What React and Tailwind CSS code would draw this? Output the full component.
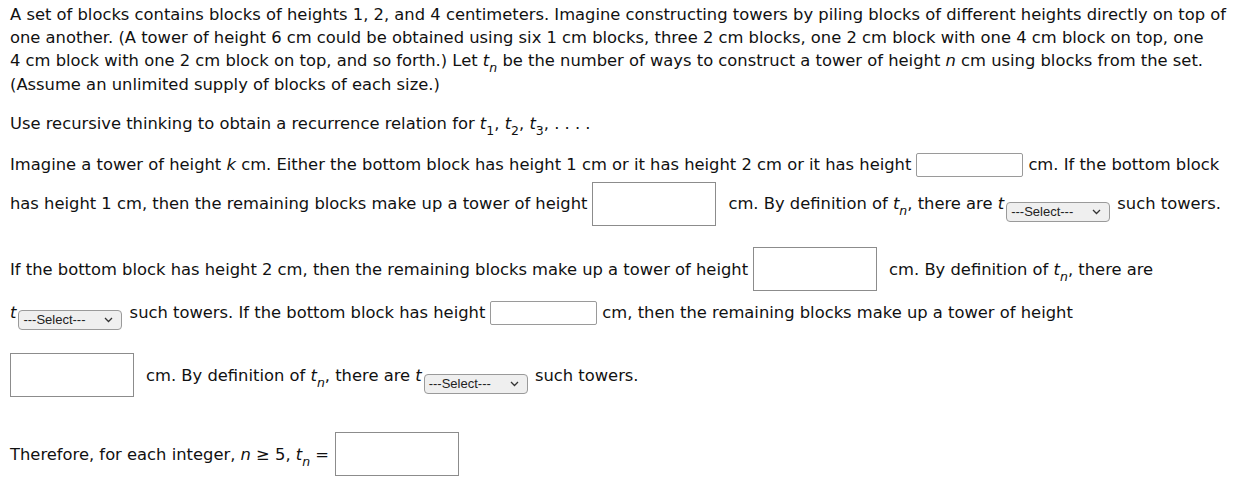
import React from 'react';

const T = ({ sub, italicSub = true }) => (
  <span className="whitespace-nowrap">
    <i>t</i>
    <span className={`relative top-[6px] text-[12.5px] ${italicSub ? 'italic' : ''}`}>{sub}</span>
  </span>
);

const SmallBox = () => (
  <span className="mx-[5px] inline-block h-[24px] w-[107px] shrink-0 rounded-[2px] border border-[#9a9a9a] bg-white" />
);

const BigBox = ({ cls = 'ml-[5px] mr-[12px]' }) => (
  <span className={`inline-block h-[44px] w-[124px] shrink-0 border border-[#8c8c8c] bg-white ${cls}`} />
);

const SelectBox = ({ offset = 'mt-[14px]' }) => (
  <span
    className={`mx-[2px] inline-flex h-[20px] w-[104px] shrink-0 items-center justify-between rounded-[4px] border border-[#9a9a9a] bg-[#efefef] pl-[4px] pr-[8px] text-[13px] text-[#222] ${offset}`}
    style={{ fontFamily: '"Liberation Sans", Arial, sans-serif' }}
  >
    <span>---Select---</span>
    <svg width="9" height="6" viewBox="0 0 9 6" fill="none">
      <path d="M1 1l3.5 3.5L8 1" stroke="#333" strokeWidth="1.3" />
    </svg>
  </span>
);

export default function App() {
  return (
    <div
      className="w-[1247px] bg-white pl-[10px] text-[16.35px] text-[#111]"
      style={{ fontFamily: '"DejaVu Sans", Verdana, sans-serif' }}
    >
      <div className="pt-[3px] leading-[23px] whitespace-nowrap">
        <div>
          A set of blocks contains blocks of heights 1, 2, and 4 centimeters. Imagine constructing towers by piling
          blocks of different heights directly on top of
        </div>
        <div>
          one another. (A tower of height 6 cm could be obtained using six 1 cm blocks, three 2 cm blocks, one 2 cm
          block with one 4 cm block on top, one
        </div>
        <div>
          4 cm block with one 2 cm block on top, and so forth.) Let <T sub="n" /> be the number of ways to construct a
          tower of height <i>n</i> cm using blocks from the set.
        </div>
        <div>(Assume an unlimited supply of blocks of each size.)</div>
      </div>

      <p className="mt-[16px] leading-[23px]">
        Use recursive thinking to obtain a recurrence relation for <T sub="1" italicSub={false} />,{' '}
        <T sub="2" italicSub={false} />, <T sub="3" italicSub={false} />, . . . .
      </p>

      <div className="mt-[17px] flex h-[24px] items-center whitespace-pre">
        <span>
          Imagine a tower of height <i>k</i> cm. Either the bottom block has height 1 cm or it has height 2 cm or it
          has height
        </span>
        <SmallBox />
        <span>cm. If the bottom block</span>
      </div>

      <div className="mt-[5px] flex h-[44px] items-center whitespace-pre">
        <span>has height 1 cm, then the remaining blocks make up a tower of height</span>
        <BigBox />
        <span>cm. By definition of <T sub="n" />, there are <i>t</i></span>
        <SelectBox offset="mt-[16px]" />
        <span> such towers.</span>
      </div>

      <div className="mt-[21px] flex h-[44px] items-center whitespace-pre">
        <span className="mt-[3px]">If the bottom block has height 2 cm, then the remaining blocks make up a tower of height</span>
        <BigBox />
        <span className="mt-[3px]">cm. By definition of <T sub="n" />, there are</span>
      </div>

      <div className="mt-[10px] flex h-[24px] items-center whitespace-pre">
        <i>t</i>
        <SelectBox offset="mt-[14px]" />
        <span> such towers. If the bottom block has height</span>
        <SmallBox />
        <span>cm, then the remaining blocks make up a tower of height</span>
      </div>

      <div className="mt-[28px] flex h-[44px] items-center whitespace-pre">
        <BigBox cls="mr-[12px]" />
        <span className="mt-[3px]">cm. By definition of <T sub="n" />, there are <i>t</i></span>
        <SelectBox offset="mt-[18px]" />
        <span className="mt-[3px]"> such towers.</span>
      </div>

      <div className="mt-[38px] flex h-[44px] items-center whitespace-pre pb-[6px]">
        <span className="mt-[2px]">Therefore, for each integer, <i>n</i> ≥ 5, <T sub="n" /> =</span>
        <BigBox cls="ml-[6px]" />
      </div>
    </div>
  );
}
